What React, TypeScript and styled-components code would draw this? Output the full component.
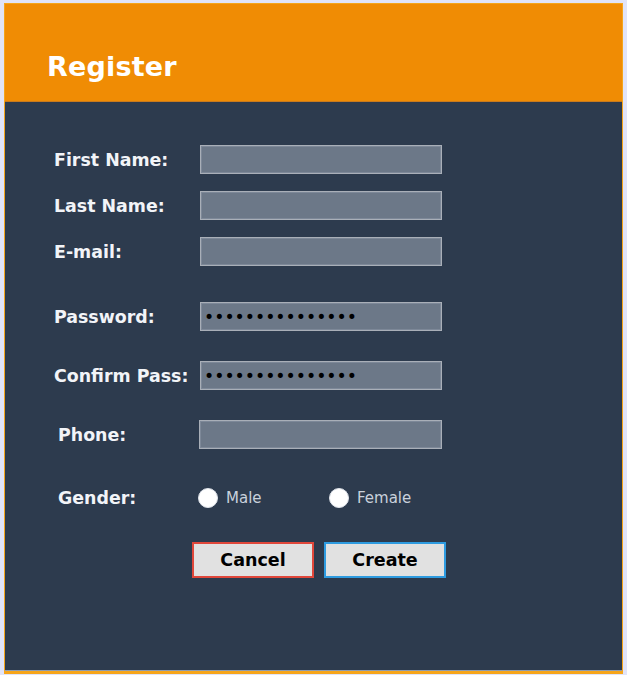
import React from 'react';
import styled, { createGlobalStyle } from 'styled-components';

const GlobalStyle = createGlobalStyle`
  html, body {
    margin: 0;
    padding: 0;
    background: #e1e4f8;
  }
  body {
    font-family: 'DejaVu Sans', Verdana, sans-serif;
  }
`;

const Frame = styled.div`
  margin: 3px 0 0 4px;
  width: 619px;
  height: 671px;
  box-sizing: border-box;
  border: 1px solid #f6a51a;
  border-bottom-width: 3px;
  display: flex;
  flex-direction: column;
  background: #2d3b4e;
`;

const Header = styled.header`
  height: 98px;
  flex-shrink: 0;
  background: #f08c04;
  border-bottom: 1px solid #c97a1c;
  display: flex;
  align-items: center;
  padding-left: 42px;
  box-sizing: border-box;
`;

const Title = styled.h1`
  margin: 28px 0 0;
  color: #ffffff;
  font-size: 27px;
  font-weight: bold;
  letter-spacing: 0.2px;
`;

const Body = styled.main`
  flex: 1;
  padding: 43px 0 0 49px;
  display: flex;
  flex-direction: column;
  border-bottom: 1px solid #8d9bb0;
`;

const Row = styled.div<{ $top: number }>`
  display: flex;
  align-items: center;
  height: 29px;
  margin-top: ${(p) => p.$top}px;
`;

const Label = styled.label<{ $indent?: number; $width?: number }>`
  box-sizing: border-box;
  width: ${(p) => p.$width ?? 146}px;
  padding-left: ${(p) => p.$indent ?? 0}px;
  color: #f2f4f8;
  font-size: 17.4px;
  font-weight: bold;
  white-space: nowrap;
`;

const Field = styled.input<{ $width?: number }>`
  box-sizing: border-box;
  width: ${(p) => p.$width ?? 242}px;
  height: 29px;
  margin: 0;
  padding: 0 0 0 3px;
  background: #6c7888;
  border: 1px solid #a9afb8;
  box-shadow: inset 0 0 0 1px #7d8898;
  outline: none;
  color: #000;
  font-family: 'DejaVu Sans', sans-serif;
  font-size: 17.3px;
`;

const Option = styled.label`
  display: flex;
  align-items: center;
  gap: 8px;
  width: 131px;
  color: #c9d1dc;
  font-size: 15px;
`;

const Radio = styled.input`
  appearance: none;
  margin: 0;
  width: 20px;
  height: 20px;
  border-radius: 50%;
  background: #ffffff;
  border: 1px solid #dfe3ea;
  box-sizing: border-box;
`;

const Actions = styled.div`
  display: flex;
  gap: 10px;
  margin-top: 30px;
  padding-left: 138px;
`;

const Button = styled.button<{ $accent: string }>`
  width: 122px;
  height: 36px;
  box-sizing: border-box;
  background: #e1e1e1;
  border: 2px solid ${(p) => p.$accent};
  font-family: 'DejaVu Sans', sans-serif;
  font-size: 17.5px;
  font-weight: bold;
  color: #000;
  padding: 0;
`;

export default function App() {
  return (
    <>
      <GlobalStyle />
      <Frame>
        <Header>
          <Title>Register</Title>
        </Header>
        <Body>
          <Row $top={0}>
            <Label>First Name:</Label>
            <Field type="text" />
          </Row>
          <Row $top={17}>
            <Label>Last Name:</Label>
            <Field type="text" />
          </Row>
          <Row $top={17}>
            <Label>E-mail:</Label>
            <Field type="text" />
          </Row>
          <Row $top={36}>
            <Label>Password:</Label>
            <Field type="password" defaultValue="passwordpasswor" />
          </Row>
          <Row $top={30}>
            <Label>Confirm Pass:</Label>
            <Field type="password" defaultValue="passwordpasswor" />
          </Row>
          <Row $top={30}>
            <Label $indent={4} $width={145}>Phone:</Label>
            <Field type="text" $width={243} />
          </Row>
          <Row $top={34}>
            <Label $indent={4} $width={144}>Gender:</Label>
            <Option>
              <Radio type="radio" name="gender" />
              Male
            </Option>
            <Option>
              <Radio type="radio" name="gender" />
              Female
            </Option>
          </Row>
          <Actions>
            <Button $accent="#e0473b">Cancel</Button>
            <Button $accent="#2e9be0">Create</Button>
          </Actions>
        </Body>
      </Frame>
    </>
  );
}
